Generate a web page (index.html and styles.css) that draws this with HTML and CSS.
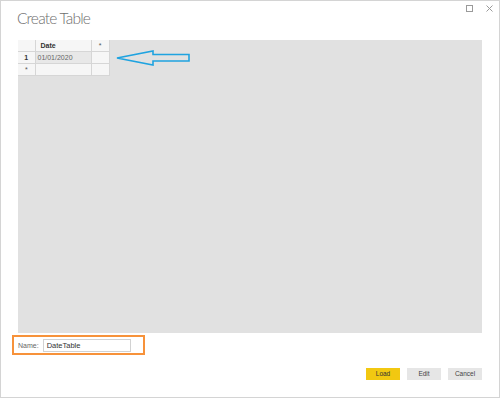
FILE: index.html
```html
<!DOCTYPE html>
<html>
<head>
<meta charset="utf-8">
<link rel="stylesheet" href="styles.css">
</head>
<body>
<div class="window">
  <div class="header">
    <h1 class="title">Create Table</h1>
    <div class="controls">
      <span class="ctl-max"></span>
      <svg class="ctl-close" width="7" height="7" viewBox="0 0 7 7"><path d="M0.5 0.5 L6.5 6.5 M6.5 0.5 L0.5 6.5" stroke="#9a9a9a" stroke-width="1" fill="none"/></svg>
    </div>
  </div>
  <div class="canvas">
    <table class="grid">
      <colgroup><col class="c-rh"><col class="c-date"><col class="c-star"></colgroup>
      <tr><th class="rh"></th><th class="date-h">Date</th><th class="star">*</th></tr>
      <tr><td class="rh num">1</td><td class="cell sel">01/01/2020</td><td class="cell"></td></tr>
      <tr><td class="rh">*</td><td class="cell"></td><td class="cell"></td></tr>
    </table>
    <svg class="arrow" width="76" height="18" viewBox="0 0 76 18">
      <polygon points="1,8 37,1 37,4.5 73,4.5 73,11 37,11 37,15" fill="none" stroke="#1fa3e0" stroke-width="1.6" stroke-linejoin="miter"/>
    </svg>
  </div>
  <div class="name-row">
    <div class="name-box">
      <span class="name-label">Name:</span>
      <div class="name-input">DateTable</div>
    </div>
  </div>
  <div class="buttons">
    <div class="btn btn-load">Load</div>
    <div class="btn">Edit</div>
    <div class="btn">Cancel</div>
  </div>
</div>
</body>
</html>
```

FILE: styles.css
```css
html, body {
  margin: 0;
  padding: 0;
  background: #ffffff;
}
.window {
  width: 500px;
  height: 398px;
  box-sizing: border-box;
  border: 1px solid #d4d4d4;
  display: flex;
  flex-direction: column;
  font-family: "Liberation Sans", Arial, sans-serif;
}
.header {
  display: flex;
  justify-content: space-between;
  align-items: flex-start;
  height: 39px;
}
.title {
  margin: 7px 0 0 16px;
  font-family: Lato, "Liberation Sans", sans-serif;
  font-weight: 300;
  font-size: 15.5px;
  letter-spacing: -0.8px;
  line-height: 20px;
  color: #6e6e6e;
}
.controls {
  display: flex;
  align-items: center;
  gap: 13px;
  margin: 4px 6px 0 0;
}
.ctl-max {
  display: block;
  width: 5px;
  height: 5px;
  border: 1px solid #9a9a9a;
}
.ctl-close {
  display: block;
}
.canvas {
  position: relative;
  margin-left: 17px;
  width: 464px;
  height: 293px;
  background: #e1e1e1;
}
.grid {
  border-collapse: collapse;
  table-layout: fixed;
  width: 91px;
  font-size: 7px;
  color: #555;
}
.c-rh { width: 17px; }
.c-date { width: 56px; }
.c-star { width: 18px; }
.grid th, .grid td {
  border: 1px solid #d6d6d6;
  height: 11px;
  padding: 0;
  line-height: 10px;
  background: #f6f6f6;
}
.grid tr:first-child th {
  border-top: none;
}
.grid tr th:first-child, .grid tr td:first-child {
  border-left: none;
}
.rh {
  text-align: center;
}
.num {
  font-weight: bold;
  color: #333;
}
.date-h {
  text-align: left;
  padding-left: 5px !important;
  font-weight: bold;
  color: #333;
}
.star {
  text-align: center;
  font-weight: normal;
}
.cell {
  padding-left: 2px !important;
}
.cell.sel {
  background: #e8e8e8 !important;
  color: #666;
}
.arrow {
  position: absolute;
  left: 98px;
  top: 10px;
}
.name-row {
  margin: 2px 0 0 11px;
}
.name-box {
  width: 133px;
  height: 20px;
  box-sizing: border-box;
  border: 2px solid #f7923a;
  display: flex;
  align-items: center;
  padding-left: 4px;
  gap: 4px;
}
.name-label {
  font-size: 7px;
  color: #666;
}
.name-input {
  width: 88px;
  height: 13px;
  box-sizing: border-box;
  border: 1px solid #d2d2d2;
  font-size: 7.5px;
  line-height: 11px;
  padding-left: 3px;
  color: #333;
  background: #fff;
}
.buttons {
  display: flex;
  justify-content: flex-end;
  gap: 7px;
  margin: 13px 17px 0 0;
}
.btn {
  width: 34px;
  height: 12px;
  background: #e6e6e6;
  font-size: 6.5px;
  line-height: 12px;
  text-align: center;
  color: #444;
}
.btn-load {
  background: #f2c811;
  color: #333;
}
```
